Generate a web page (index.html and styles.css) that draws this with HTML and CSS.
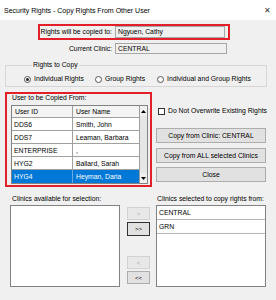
FILE: index.html
```html
<!DOCTYPE html>
<html>
<head>
<meta charset="utf-8">
<link rel="stylesheet" href="styles.css">
</head>
<body>
<div class="window">
  <div class="titlebar">
    <span class="title">Security Rights - Copy Rights From Other User</span>
    <span class="close">&#x2715;</span>
  </div>
  <div class="dialog">
    <div class="info-row hl">
      <span class="lbl">Rights will be copied to:</span>
      <span class="tb">Ngyuen, Cathy</span>
    </div>
    <div class="info-row plain">
      <span class="lbl">Current Clinic:</span>
      <span class="tb wide">CENTRAL</span>
    </div>
    <fieldset class="group">
      <legend>Rights to Copy</legend>
      <div class="radios">
        <span class="radio r1"><span class="dot on"></span>Individual Rights</span>
        <span class="radio r2"><span class="dot"></span>Group Rights</span>
        <span class="radio r3"><span class="dot"></span>Individual and Group Rights</span>
      </div>
    </fieldset>
    <div class="mid">
      <div class="userbox">
        <div class="ulabel">User to be Copied From:</div>
        <div class="grid">
          <div class="gtable">
            <div class="grow head"><span class="c1">User ID</span><span class="c2">User Name</span></div>
            <div class="grow"><span class="c1">DDS6</span><span class="c2">Smith, John</span></div>
            <div class="grow"><span class="c1">DDS7</span><span class="c2">Leaman, Barbara</span></div>
            <div class="grow"><span class="c1">ENTERPRISE</span><span class="c2">,</span></div>
            <div class="grow"><span class="c1">HYG2</span><span class="c2">Ballard, Sarah</span></div>
            <div class="grow sel"><span class="c1">HYG4</span><span class="c2">Heyman, Daria</span></div>
          </div>
          <div class="scroll">
            <span class="sbtn"><svg width="5" height="3" viewBox="0 0 5 3"><path d="M0 3 L2.5 0 L5 3 Z" fill="#000"/></svg></span>
            <span class="track"></span>
            <span class="sbtn"><svg width="5" height="3" viewBox="0 0 5 3"><path d="M0 0 L2.5 3 L5 0 Z" fill="#000"/></svg></span>
          </div>
        </div>
      </div>
      <div class="actions">
        <span class="check"><span class="box"></span>Do Not Overwrite Existing Rights</span>
        <span class="btn b1">Copy from Clinic: CENTRAL</span>
        <span class="btn b2">Copy from ALL selected Clinics</span>
        <span class="btn b3">Close</span>
      </div>
    </div>
    <div class="lists">
      <span class="llabel left">Clinics available for selection:</span>
      <span></span>
      <span class="llabel right">Clinics selected to copy rights from:</span>
      <div class="listbox"></div>
      <div class="movers">
        <span class="mbtn dis">&gt;</span>
        <span class="mbtn focus">&gt;&gt;</span>
        <span class="mbtn dis gap">&lt;</span>
        <span class="mbtn">&lt;&lt;</span>
      </div>
      <div class="listbox">
        <div class="item">CENTRAL</div>
        <div class="item">GRN</div>
      </div>
    </div>
  </div>
</div>
</body>
</html>
```

FILE: styles.css
```css
* { box-sizing: border-box; }
html, body { margin: 0; padding: 0; }
body {
  font-family: "Liberation Sans", Arial, sans-serif;
  font-size: 6.8px;
  color: #000;
  background: #f0f0f0;
}
.window { width: 276px; height: 300px; background: #f0f0f0; overflow: hidden; }
.titlebar {
  height: 20px;
  background: #fff;
  display: flex;
  align-items: center;
  justify-content: space-between;
  padding: 0 5px 0 4px;
}
.title { font-size: 7px; color: #000; }
.close { font-size: 8px; color: #333; }
.dialog { display: flex; flex-direction: column; }

.info-row { display: flex; align-items: center; }
.info-row .lbl { width: 75px; text-align: right; padding-right: 3px; line-height: 8px; white-space: nowrap; }
.info-row .tb {
  width: 110px;
  height: 12px;
  border: 1px solid #a6a6a6;
  background: #f0f0f0;
  padding-left: 2px;
  line-height: 10px;
}
.info-row .tb.wide { width: 112px; height: 11px; line-height: 9px; }
.hl {
  margin: 4px 0 0 38px;
  width: 192px;
  height: 16px;
  border: 2px solid #e3202a;
}
.plain { margin: 3px 0 0 40px; height: 11px; }

.group {
  margin: 7px 0 0 5px;
  width: 262px;
  border: 1px solid #d5d5d5;
  padding: 6px 0 3px 18px;
  min-width: 0;
}
.group legend {
  margin-left: 8px;
  padding: 0 1px;
  line-height: 8px;
  font-size: 6.8px;
}
.radios { display: flex; height: 8px; align-items: center; }
.radio { display: flex; align-items: center; gap: 3px; line-height: 8px; white-space: nowrap; }
.r1 { width: 71px; }
.r2 { width: 62px; }
.dot {
  width: 7px; height: 7px;
  border: 1px solid #555;
  border-radius: 50%;
  background: #fff;
  display: flex; align-items: center; justify-content: center;
}
.dot.on::after {
  content: "";
  width: 3px; height: 3px;
  border-radius: 50%;
  background: #222;
}

.mid { display: flex; margin-top: 5px; }
.userbox {
  margin-left: 5px;
  width: 147px;
  height: 95px;
  border: 2px solid #e3202a;
  display: flex;
  flex-direction: column;
}
.ulabel { margin: 0 0 0 5px; line-height: 8px; }
.grid {
  margin: 3px 0 0 4px;
  width: 137px;
  height: 79px;
  border: 1px solid #828282;
  display: flex;
  background: #fff;
}
.gtable { width: 127px; display: flex; flex-direction: column; }
.grow { display: flex; height: 13px; border-bottom: 1px solid #a0a0a0; align-items: center; }
.grow.head { height: 12px; background: #f4f4f4; }
.grow:last-child { border-bottom: none; }
.c1 { width: 61px; height: 100%; border-right: 1px solid #a0a0a0; padding-left: 2px; display: flex; align-items: center; }
.c2 { flex: 1; padding-left: 3px; display: flex; align-items: center; height: 100%; }
.grow.head .c1 { padding-left: 3px; }
.grow.sel { background: #0078d7; color: #fff; }
.grow.sel .c1 { border-right-color: #6aa6df; }
.scroll {
  width: 8px;
  border-left: 1px solid #a0a0a0;
  display: flex;
  flex-direction: column;
  background: #f0f0f0;
}
.sbtn { height: 10px; display: flex; align-items: center; justify-content: center; background: #f0f0f0; }
.track { flex: 1; background: #e6e6e6; }

.actions { margin-left: 4px; width: 110px; display: flex; flex-direction: column; padding-top: 15px; }
.check { display: flex; align-items: center; gap: 3px; padding-left: 2px; line-height: 8px; height: 8px; white-space: nowrap; }
.box { width: 7px; height: 7px; border: 1px solid #333; background: #fff; flex: none; }
.btn {
  height: 15px;
  background: #e1e1e1;
  border: 1px solid #adadad;
  display: flex;
  align-items: center;
  justify-content: center;
  white-space: nowrap;
}
.b1 { margin-top: 13px; }
.b2 { margin-top: 5px; }
.b3 { margin-top: 4px; }

.lists {
  display: grid;
  grid-template-columns: 110px 36px 110px;
  margin: 8px 0 0 10px;
}
.llabel { line-height: 8px; height: 8px; white-space: nowrap; }
.llabel.left { margin-left: 2px; }
.llabel.right { margin-left: 1px; }
.listbox {
  margin-top: 2px;
  height: 82px;
  border: 1px solid #828282;
  background: #fff;
}
.movers { display: flex; flex-direction: column; padding-top: 4px; margin: 0 6px 0 7px; }
.mbtn {
  height: 13px;
  background: #e1e1e1;
  border: 1px solid #adadad;
  display: flex;
  align-items: center;
  justify-content: center;
  margin-bottom: 2px;
  font-size: 6px;
}
.mbtn.dis { background: #e8e8e8; border-color: #d2d2d2; color: #a8a8a8; }
.mbtn.focus { border: 1px solid #333; box-shadow: inset 0 0 0 1px #e1e1e1; height: 14px; }
.mbtn.gap { margin-top: 18px; }
.item { height: 14px; border-bottom: 1px solid #b4b4b4; padding-left: 2px; display: flex; align-items: center; }
```
